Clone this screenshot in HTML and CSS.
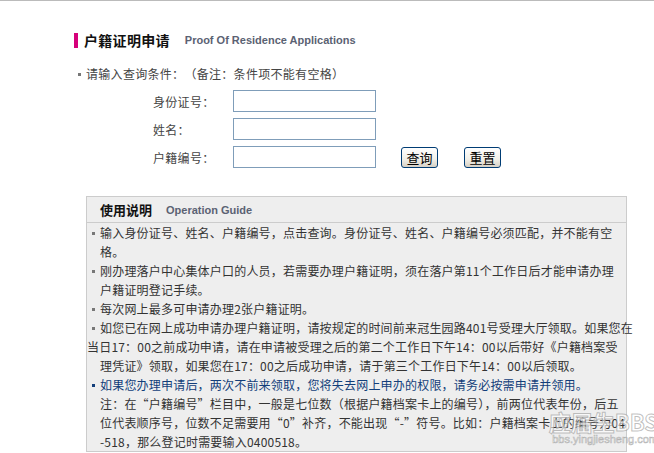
FILE: index.html
```html
<!DOCTYPE html>
<html lang="zh-CN">
<head>
   <meta charset="UTF-8">
   <title>户籍证明申请</title>
   <link rel="stylesheet" href="styles.css">
</head>
<body>
   <div class="page">
      <div class="title">
         <span class="title-bar"></span>
         <h1>户籍证明申请</h1>
         <span class="title-en">Proof Of Residence Applications</span>
      </div>

      <p class="hint"><span class="dot"></span>请输入查询条件：<span class="hint-note">（备注：条件项不能有空格）</span></p>

      <form class="query-form" onsubmit="return false;">
         <label for="idno">身份证号：</label>
         <input type="text" id="idno" name="idno" autofocus>
         <span></span><span></span>

         <label for="name">姓名：</label>
         <input type="text" id="name" name="name">
         <span></span><span></span>

         <label for="hjno">户籍编号：</label>
         <input type="text" id="hjno" name="hjno">
         <button type="submit">查询</button>
         <button type="reset">重置</button>
      </form>

      <div class="guide">
         <div class="guide-head">
            <h4>使用说明</h4>
            <span class="guide-en">Operation Guide</span>
         </div>
         <div class="guide-body">
            <p><span class="dot"></span>输入身份证号、姓名、户籍编号，点击查询。身份证号、姓名、户籍编号必须匹配，并不能有空<br><span class="ind">格。</span></p>
            <p><span class="dot"></span>刚办理落户中心集体户口的人员，若需要办理户籍证明，须在落户第11个工作日后才能申请办理<br><span class="ind">户籍证明登记手续。</span></p>
            <p><span class="dot"></span>每次网上最多可申请办理2张户籍证明。</p>
            <p><span class="dot"></span>如您已在网上成功申请办理户籍证明，请按规定的时间前来冠生园路401号受理大厅领取。如果您在<br>当日17：00之前成功申请，请在申请被受理之后的第二个工作日下午14：00以后带好《户籍档案受<br><span class="ind">理凭证》领取，如果您在17：00之后成功申请，请于第三个工作日下午14：00以后领取。</span></p>
            <p class="warn"><span class="dot"></span>如果您办理申请后，两次不前来领取，您将失去网上申办的权限，请务必按需申请并领用。</p>
            <p class="ind">注：在“户籍编号”栏目中，一般是七位数（根据户籍档案卡上的编号），前两位代表年份，后五<br>位代表顺序号，位数不足需要用“0”补齐，不能出现“-”符号。比如：户籍档案卡上的编号为04<br>-518，那么登记时需要输入0400518。</p>
         </div>
      </div>

      <div class="watermark">
         <span class="wm-big">应届生BBS</span>
         <span class="wm-small">bbs.yingjiesheng.com</span>
      </div>
   </div>
</body>
</html>
```

FILE: styles.css
```css
body {
   margin: 0;
   padding: 0;
   background-color: #fff;
   font-family: "Noto Sans CJK SC", "Liberation Sans", sans-serif;
   font-size: 12px;
   color: #333;
}

.page {
   position: relative;
   height: 452px;
   border-top: 1px solid #bbb;
   padding-left: 74px;
   overflow: hidden;
}

.title {
   display: flex;
   align-items: center;
   margin-top: 31px;
   height: 16px;
}

.title-bar {
   width: 4px;
   height: 15px;
   background-color: #d6007a;
   margin-right: 6px;
}

h1 {
   margin: 0;
   font-size: 14px;
   font-weight: bold;
   color: #111;
   line-height: 16px;
   letter-spacing: 0.3px;
}

.title-en {
   margin-left: 15px;
   font-family: "Liberation Sans", sans-serif;
   font-size: 11px;
   font-weight: bold;
   color: #5b6273;
}

.dot {
   display: inline-block;
   width: 3px;
   height: 3px;
   background-color: #777;
   vertical-align: middle;
   margin: 0 5px 2px 0;
}

.hint {
   margin: 17px 0 0 4px;
   line-height: 18px;
   color: #444;
   letter-spacing: 0.3px;
}

.hint-note {
   margin-left: 6px;
}

.query-form {
   display: grid;
   grid-template-columns: 80px 143px 88px 37px;
   grid-auto-rows: 22px;
   row-gap: 6px;
   align-items: center;
   margin: 7px 0 0 79px;
}

.query-form label {
   color: #444;
   letter-spacing: 0.3px;
}

.query-form input[type="text"] {
   width: 143px;
   height: 22px;
   box-sizing: border-box;
   border: 1px solid #7f9db9;
   padding: 0 3px;
   font-size: 12px;
}

.query-form input[type="text"]:focus {
   outline: none;
}

.query-form button {
   width: 37px;
   height: 21px;
   padding: 0;
   border: 1px solid #003c74;
   border-radius: 3px;
   background: linear-gradient(#fff, #f0efe8 60%, #d6d0c5);
   font-family: "Noto Sans CJK SC", sans-serif;
   font-size: 13px;
   color: #000;
   line-height: 19px;
   cursor: pointer;
}

.query-form button[type="submit"] {
   margin-left: 25px;
}

.guide {
   width: 541px;
   box-sizing: border-box;
   margin: 28px 0 0 12px;
   border: 1px solid #ccc;
   background-color: #eee;
}

.guide-head {
   display: flex;
   align-items: center;
   height: 25px;
   border-bottom: 1px solid #ccc;
   padding-left: 13px;
}

.guide-head h4 {
   margin: 0;
   font-size: 13px;
   font-weight: bold;
   color: #111;
}

.guide-en {
   margin-left: 14px;
   font-family: "Liberation Sans", sans-serif;
   font-size: 11px;
   font-weight: bold;
   color: #5b6273;
}

.guide-body p {
   margin: 0;
   line-height: 19px;
   color: #333;
   white-space: nowrap;
   letter-spacing: 0.2px;
}

.guide-body .dot {
   margin-left: 5px;
}

.guide-body .ind,
.guide-body p.ind {
   padding-left: 13px;
}

.guide-body .warn {
   color: #123e7a;
}

.guide-body .warn .dot {
   background-color: #123e7a;
}

.watermark {
   position: absolute;
   right: -4px;
   top: 408px;
   display: flex;
   flex-direction: column;
   align-items: flex-end;
   color: rgba(255, 255, 255, 0.6);
   pointer-events: none;
}

.wm-big {
   font-size: 22px;
   line-height: 24px;
   font-weight: bold;
   -webkit-text-stroke: 1px rgba(150, 150, 150, 0.6);
}

.wm-small {
   font-family: "Liberation Sans", sans-serif;
   font-size: 11px;
   line-height: 12px;
   -webkit-text-stroke: 0.6px rgba(150, 150, 150, 0.7);
}
```
